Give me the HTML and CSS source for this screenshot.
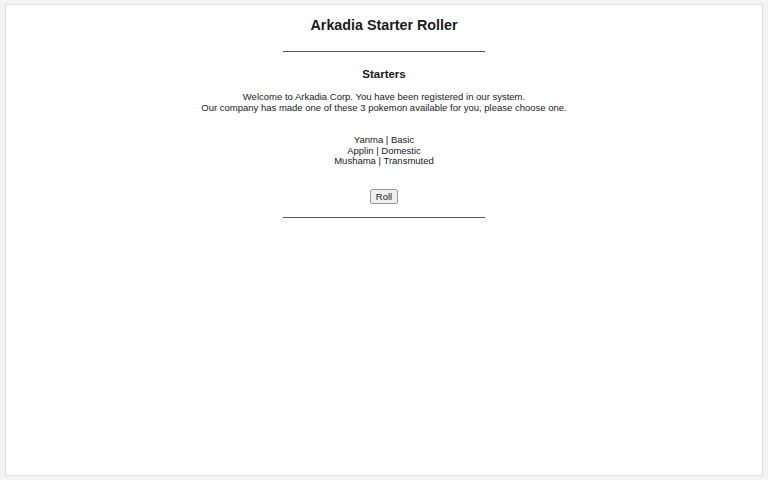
FILE: index.html
```html
<!DOCTYPE html>
<html lang="en">
<head>
    <meta charset="UTF-8">
    <meta name="viewport" content="width=device-width, initial-scale=1.0">
    <title>Arkadia Starter Roller</title>
    <link rel="stylesheet" href="styles.css">
</head>
<body>
    <div class="card">
        <h1>Arkadia Starter Roller</h1>
        <hr>
        <h2>Starters</h2>
        <p class="intro">
            Welcome to Arkadia Corp. You have been registered in our system.<br>
            Our company has made one of these 3 pokemon available for you, please choose one.
        </p>
        <div id="starters" class="starters">
            <div>Yanma | Basic</div>
            <div>Applin | Domestic</div>
            <div>Mushama | Transmuted</div>
        </div>
        <button type="button" id="roll">Roll</button>
        <hr class="bottom">
    </div>
</body>
</html>
```

FILE: styles.css
```css
body {
    font-family: "Liberation Sans", Arial, sans-serif;
    background-color: #f4f4f4;
    color: #1a1a1a;
    margin: 0;
    padding: 4px 5px 5px;
}

.card {
    height: 472px;
    background-color: #fff;
    border: 1px solid #ddd;
    text-align: center;
    padding-top: 1px;
    box-sizing: border-box;
}

h1 {
    font-size: 14.3px;
    line-height: 16px;
    margin: 11px 0 0;
}

hr {
    width: 202px;
    margin: 18px auto 0;
    border: none;
    border-top: 1px solid #555;
}

h2 {
    font-size: 11.5px;
    line-height: 13px;
    margin: 16px 0 0;
}

.intro {
    font-size: 9.5px;
    line-height: 10.5px;
    margin: 11px 0 0;
}

.starters {
    font-size: 9.5px;
    line-height: 10.5px;
    margin: 22px 0 0;
}

button {
    display: block;
    font-family: "Liberation Sans", Arial, sans-serif;
    font-size: 9.5px;
    color: #1a1a1a;
    background-color: #efefef;
    border: 1px solid #999;
    border-radius: 2px;
    margin: 22px auto 0;
    padding: 1px 5px;
}

hr.bottom {
    margin-top: 13px;
}
```
